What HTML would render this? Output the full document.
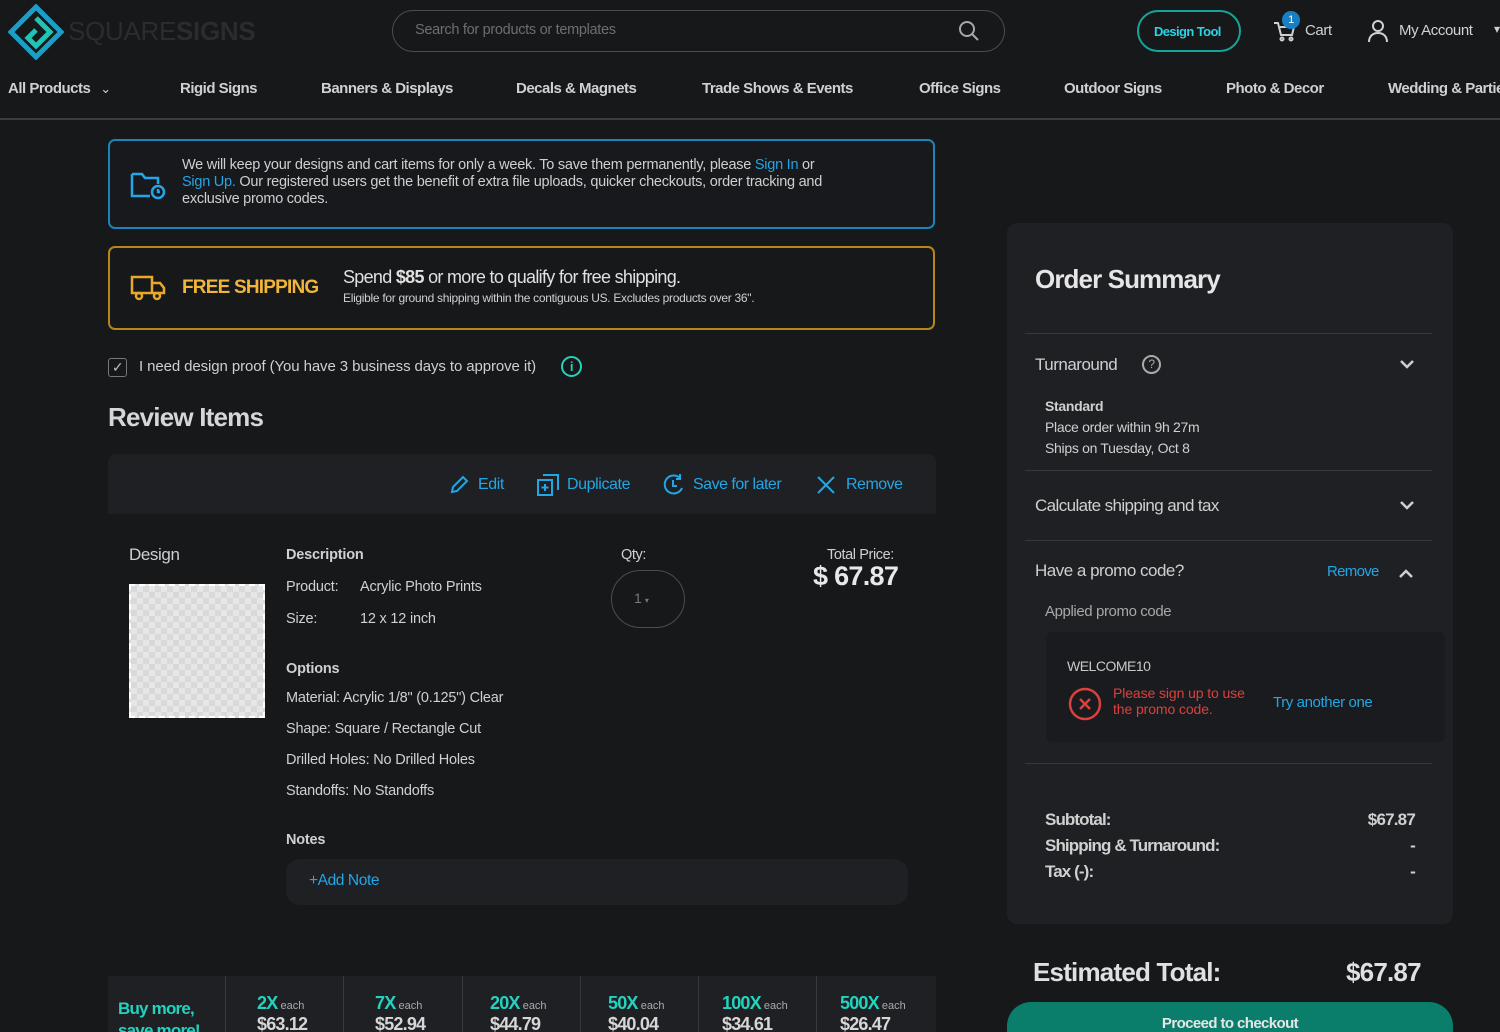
<!DOCTYPE html>
<html style="overflow:hidden;height:1032px"><head><meta charset="utf-8"><style>
*{box-sizing:border-box;margin:0;padding:0}
body{width:1500px;height:1032px;overflow:hidden;background:#17181a;color:#d6d6d6;font-family:"Liberation Sans",sans-serif;position:relative;letter-spacing:-0.4px}
.a{position:absolute;white-space:nowrap}
.b{color:#23a6e6}
.t{color:#22d3c0}
.card{position:absolute;background:#1f2023;border-radius:8px}
.hr{position:absolute;height:1px;background:#36383b}
.n{font-family:"Liberation Sans",sans-serif}
.nav span{letter-spacing:-0.5px}
</style></head><body>
<svg class="a" style="left:8px;top:4px" width="56" height="56" viewBox="0 0 56 56"><g fill="none" stroke-width="5"><path d="M28 3 L53 28 L28 53 L3 28 Z" stroke="#1a9fc9"/><path d="M28 14 L42 28 L28 42 L20 34 L28 26" stroke="#20c4b6"/></g></svg>
<div class="a n" style="left:68px;top:16px;font-size:26px;color:#2a2c2f;letter-spacing:-0.3px">SQUARE<b>SIGNS</b></div>
<div class="a" style="left:392px;top:10px;width:613px;height:42px;border:1px solid #4a4c50;border-radius:21px"></div>
<div class="a" style="left:415px;top:22px;font-size:14.5px;color:#6c6e72;letter-spacing:-0.3px">Search for products or templates</div>
<svg class="a" style="left:957px;top:19px" width="24" height="24" viewBox="0 0 24 24" fill="none" stroke="#a8a8a8" stroke-width="2"><circle cx="10" cy="10" r="7"/><path d="M15 15l6 6"/></svg>
<div class="a" style="left:1137px;top:10px;width:104px;height:42px;border:2px solid #16a39a;border-radius:21px"></div>
<div class="a n" style="left:1154px;top:24px;font-size:13px;font-weight:bold;color:#2ad3e6;letter-spacing:-0.6px">Design Tool</div>
<svg class="a" style="left:1273px;top:20px" width="24" height="22" viewBox="0 0 24 22" fill="none" stroke="#cfcfcf" stroke-width="2"><path d="M1 3h4l3 12h11l2-8H7"/><circle cx="9" cy="19" r="1.5"/><circle cx="18" cy="19" r="1.5"/></svg>
<div class="a n" style="left:1282px;top:11px;width:18px;height:18px;border-radius:9px;background:#1780c4;color:#fff;font-size:11px;text-align:center;line-height:18px">1</div>
<div class="a n" style="left:1305px;top:22px;font-size:15px;color:#d0d0d0">Cart</div>
<svg class="a" style="left:1367px;top:19px" width="22" height="24" viewBox="0 0 22 24" fill="none" stroke="#d0d0d0" stroke-width="2"><circle cx="11" cy="7" r="5"/><path d="M2 23c0-6 4-9 9-9s9 3 9 9"/></svg>
<div class="a n" style="left:1399px;top:22px;font-size:15px;color:#d0d0d0">My Account</div>
<div class="a" style="left:1494px;top:22px;font-size:12px;color:#d0d0d0">▾</div>
<div class="a nav" style="top:80px;left:8px;font-size:15px;font-weight:bold;color:#d0d0d0;width:1500px">
<span class="a" style="left:0">All Products <span style="font-weight:normal;font-size:13px">&nbsp;&nbsp;⌄</span></span>
<span class="a" style="left:172px">Rigid Signs</span>
<span class="a" style="left:313px">Banners &amp; Displays</span>
<span class="a" style="left:508px">Decals &amp; Magnets</span>
<span class="a" style="left:694px">Trade Shows &amp; Events</span>
<span class="a" style="left:911px">Office Signs</span>
<span class="a" style="left:1056px">Outdoor Signs</span>
<span class="a" style="left:1218px">Photo &amp; Decor</span>
<span class="a" style="left:1380px">Wedding &amp; Parties</span>
</div>
<div class="hr" style="left:0;top:118px;width:1500px;background:#3a3c40;height:2px"></div>

<div class="a" style="left:108px;top:139px;width:827px;height:90px;border:2px solid #1b84bf;border-radius:7px;background:#17191c"></div>
<svg class="a" style="left:130px;top:170px" width="36" height="30" viewBox="0 0 36 30" fill="none" stroke="#23a6e6" stroke-width="2.5"><path d="M2 4h10l3 4h13v6M2 4v22h18"/><circle cx="28" cy="22" r="6"/><path d="M28 19v3h2"/></svg>
<div class="a" style="left:182px;top:157px;font-size:14.5px;line-height:17px;color:#cfcfcf;letter-spacing:-0.25px">We will keep your designs and cart items for only a week. To save them permanently, please <span class="b">Sign In</span> or<br><span class="b">Sign Up.</span> Our registered users get the benefit of extra file uploads, quicker checkouts, order tracking and<br>exclusive promo codes.</div>
<div class="a" style="left:108px;top:246px;width:827px;height:84px;border:2px solid #b5871a;border-radius:7px"></div>
<svg class="a" style="left:130px;top:275px" width="36" height="26" viewBox="0 0 36 26" fill="none" stroke="#e8a92a" stroke-width="2.5"><path d="M2 2h20v16H2zM22 8h8l4 5v5H22"/><circle cx="9" cy="21" r="3"/><circle cx="27" cy="21" r="3"/></svg>
<div class="a" style="left:182px;top:277px;font-size:19px;font-weight:bold;color:#f0b53a;letter-spacing:-0.8px">FREE SHIPPING</div>
<div class="a" style="left:343px;top:267px;font-size:18px;color:#e0e0e0;letter-spacing:-0.7px">Spend <b>$85</b> or more to qualify for free shipping.</div>
<div class="a" style="left:343px;top:291px;font-size:12px;color:#d0d0d0;letter-spacing:-0.3px">Eligible for ground shipping within the contiguous US. Excludes products over 36".</div>
<div class="a" style="left:108px;top:358px;width:19px;height:19px;border:1px solid #777;border-radius:3px;color:#bbb;font-size:14px;text-align:center;line-height:17px">✓</div>
<div class="a" style="left:139px;top:358px;font-size:15px;color:#cfcfcf;letter-spacing:-0.1px">I need design proof (You have 3 business days to approve it)</div>
<div class="a n" style="left:561px;top:356px;width:21px;height:21px;border:2px solid #22d3c0;border-radius:50%;color:#22d3c0;font-size:13px;font-weight:bold;text-align:center;line-height:17px">i</div>
<div class="a" style="left:108px;top:402px;font-size:26px;font-weight:bold;color:#d6d6d6;letter-spacing:-0.8px">Review Items</div>

<div class="card" style="left:108px;top:454px;width:828px;height:60px;border-radius:8px 8px 0 0"></div>
<svg class="a" style="left:449px;top:475px" width="20" height="20" viewBox="0 0 20 20" fill="none" stroke="#23a6e6" stroke-width="2"><path d="M3 17l1-5L14 2l4 4L8 16z"/></svg>
<div class="a b" style="left:478px;top:476px;font-size:16px">Edit</div>
<svg class="a" style="left:537px;top:474px" width="22" height="22" viewBox="0 0 22 22" fill="none" stroke="#23a6e6" stroke-width="2"><rect x="1" y="6" width="14" height="15"/><path d="M6 1h15v15"/><path d="M8 10v7M4.5 13.5h7"/></svg>
<div class="a b" style="left:567px;top:476px;font-size:16px;letter-spacing:-0.4px">Duplicate</div>
<svg class="a" style="left:662px;top:474px" width="24" height="22" viewBox="0 0 24 22" fill="none" stroke="#23a6e6" stroke-width="2"><path d="M18 4A9 9 0 1 0 20 14"/><path d="M18 0v5h-4M11 6v6h4"/></svg>
<div class="a b" style="left:693px;top:476px;font-size:16px;letter-spacing:-0.5px">Save for later</div>
<svg class="a" style="left:816px;top:475px" width="20" height="20" viewBox="0 0 20 20" fill="none" stroke="#23a6e6" stroke-width="2"><path d="M2 2l16 16M18 2L2 18"/></svg>
<div class="a b" style="left:846px;top:476px;font-size:16px;letter-spacing:-0.5px">Remove</div>

<div class="a" style="left:129px;top:545px;font-size:17px;color:#cfcfcf">Design</div>
<div class="a" style="left:129px;top:584px;width:136px;height:134px;border:2px dashed #fff;background:#d9d9d9;background-image:linear-gradient(45deg,#e6e6e6 25%,transparent 25%,transparent 75%,#e6e6e6 75%),linear-gradient(45deg,#e6e6e6 25%,transparent 25%,transparent 75%,#e6e6e6 75%);background-size:12px 12px;background-position:0 0,6px 6px"></div>
<div style="letter-spacing:-0.2px">
<div class="a" style="left:286px;top:547px;font-size:14.5px;font-weight:bold;color:#d0d0d0">Description</div>
<div class="a" style="left:286px;top:579px;font-size:14.5px;color:#d0d0d0">Product:</div>
<div class="a" style="left:360px;top:579px;font-size:14.5px;color:#d0d0d0">Acrylic Photo Prints</div>
<div class="a" style="left:286px;top:611px;font-size:14.5px;color:#d0d0d0">Size:</div>
<div class="a" style="left:360px;top:611px;font-size:14.5px;color:#d0d0d0">12 x 12 inch</div>
<div class="a" style="left:286px;top:661px;font-size:14.5px;font-weight:bold;color:#d0d0d0">Options</div>
<div class="a" style="left:286px;top:690px;font-size:14.5px;color:#d0d0d0">Material: Acrylic 1/8" (0.125") Clear</div>
<div class="a" style="left:286px;top:721px;font-size:14.5px;color:#d0d0d0">Shape: Square / Rectangle Cut</div>
<div class="a" style="left:286px;top:752px;font-size:14.5px;color:#d0d0d0">Drilled Holes: No Drilled Holes</div>
<div class="a" style="left:286px;top:783px;font-size:14.5px;color:#d0d0d0">Standoffs: No Standoffs</div>
<div class="a" style="left:286px;top:832px;font-size:14.5px;font-weight:bold;color:#d0d0d0">Notes</div>
</div>
<div class="card" style="left:286px;top:859px;width:622px;height:46px;border-radius:14px"></div>
<div class="a b" style="left:309px;top:872px;font-size:15.5px;letter-spacing:-0.4px">+Add Note</div>
<div class="a" style="left:621px;top:547px;font-size:14.5px;color:#d0d0d0">Qty:</div>
<div class="a" style="left:611px;top:570px;width:74px;height:58px;border:1px solid #4a4c50;border-radius:29px"></div>
<div class="a n" style="left:634px;top:590px;font-size:14px;color:#777">1 <span style="font-size:8px">▾</span></div>
<div class="a" style="left:827px;top:547px;font-size:14.5px;color:#d0d0d0;letter-spacing:-0.4px">Total Price:</div>
<div class="a" style="left:813px;top:561px;font-size:27px;font-weight:bold;color:#e8e8e8;letter-spacing:-0.7px">$ 67.87</div>

<div class="card" style="left:108px;top:976px;width:828px;height:60px;border-radius:0"></div>
<div class="a t" style="left:118px;top:998px;font-size:17px;font-weight:bold;line-height:22px;letter-spacing:-0.8px">Buy more,<br>save more!</div>
<div style="position:absolute;left:225px;top:976px">
<div class="a" style="left:0;top:0;width:1px;height:56px;background:#36383b"></div>
<div class="a" style="left:118px;top:0;width:1px;height:56px;background:#36383b"></div>
<div class="a" style="left:237px;top:0;width:1px;height:56px;background:#36383b"></div>
<div class="a" style="left:355px;top:0;width:1px;height:56px;background:#36383b"></div>
<div class="a" style="left:473px;top:0;width:1px;height:56px;background:#36383b"></div>
<div class="a" style="left:591px;top:0;width:1px;height:56px;background:#36383b"></div>
</div>
<div class="a" style="top:994px;left:0;font-weight:bold;letter-spacing:-0.8px;line-height:18px">
<div class="a" style="left:257px"><span class="t" style="font-size:18px">2X</span><span style="font-size:11px;color:#aaa;font-weight:normal;letter-spacing:0"> each</span><br><span style="font-size:18px;color:#d6d6d6">$63.12</span></div>
<div class="a" style="left:375px"><span class="t" style="font-size:18px">7X</span><span style="font-size:11px;color:#aaa;font-weight:normal;letter-spacing:0"> each</span><br><span style="font-size:18px;color:#d6d6d6">$52.94</span></div>
<div class="a" style="left:490px"><span class="t" style="font-size:18px">20X</span><span style="font-size:11px;color:#aaa;font-weight:normal;letter-spacing:0"> each</span><br><span style="font-size:18px;color:#d6d6d6">$44.79</span></div>
<div class="a" style="left:608px"><span class="t" style="font-size:18px">50X</span><span style="font-size:11px;color:#aaa;font-weight:normal;letter-spacing:0"> each</span><br><span style="font-size:18px;color:#d6d6d6">$40.04</span></div>
<div class="a" style="left:722px"><span class="t" style="font-size:18px">100X</span><span style="font-size:11px;color:#aaa;font-weight:normal;letter-spacing:0"> each</span><br><span style="font-size:18px;color:#d6d6d6">$34.61</span></div>
<div class="a" style="left:840px"><span class="t" style="font-size:18px">500X</span><span style="font-size:11px;color:#aaa;font-weight:normal;letter-spacing:0"> each</span><br><span style="font-size:18px;color:#d6d6d6">$26.47</span></div>
</div>

<div class="card n" style="left:1007px;top:223px;width:446px;height:701px;border-radius:10px"></div>
<div class="a n" style="left:1035px;top:264px;font-size:26px;font-weight:bold;color:#e6e6e6;letter-spacing:-0.9px">Order Summary</div>
<div class="hr" style="left:1025px;top:333px;width:407px"></div>
<div class="a n" style="left:1035px;top:355px;font-size:17px;color:#cfcfcf;letter-spacing:-0.5px">Turnaround</div>
<div class="a n" style="left:1142px;top:355px;width:19px;height:19px;border:2px solid #aaa;border-radius:50%;font-size:12px;color:#aaa;text-align:center;line-height:15px">?</div>
<svg class="a" style="left:1399px;top:359px" width="16" height="10" viewBox="0 0 16 10" fill="none" stroke="#cfcfcf" stroke-width="2.5"><path d="M2 2l6 6 6-6"/></svg>
<div class="a n" style="left:1045px;top:396px;font-size:14px;line-height:21px;color:#d0d0d0;letter-spacing:-0.3px"><b>Standard</b><br>Place order within 9h 27m<br>Ships on Tuesday, Oct 8</div>
<div class="hr" style="left:1025px;top:470px;width:407px"></div>
<div class="a n" style="left:1035px;top:496px;font-size:17px;color:#cfcfcf;letter-spacing:-0.6px">Calculate shipping and tax</div>
<svg class="a" style="left:1399px;top:500px" width="16" height="10" viewBox="0 0 16 10" fill="none" stroke="#cfcfcf" stroke-width="2.5"><path d="M2 2l6 6 6-6"/></svg>
<div class="hr" style="left:1025px;top:540px;width:407px"></div>
<div class="a n" style="left:1035px;top:561px;font-size:17px;color:#cfcfcf;letter-spacing:-0.5px">Have a promo code?</div>
<div class="a n b" style="left:1327px;top:563px;font-size:15px;letter-spacing:-0.7px">Remove</div>
<svg class="a" style="left:1398px;top:569px" width="16" height="10" viewBox="0 0 16 10" fill="none" stroke="#cfcfcf" stroke-width="2.5"><path d="M2 8l6-6 6 6"/></svg>
<div class="a n" style="left:1045px;top:603px;font-size:15px;color:#a8a8a8;letter-spacing:-0.4px">Applied promo code</div>
<div class="a" style="left:1046px;top:632px;width:399px;height:110px;background:#1a1b1e;border-radius:6px"></div>
<div class="a n" style="left:1067px;top:658px;font-size:14px;color:#c8c8c8;letter-spacing:-0.5px">WELCOME10</div>
<svg class="a" style="left:1067px;top:686px" width="36" height="36" viewBox="0 0 36 36" fill="none" stroke="#d9413f" stroke-width="2.5"><circle cx="18" cy="18" r="15"/><path d="M13 13l10 10M23 13l-10 10"/></svg>
<div class="a n" style="left:1113px;top:685px;font-size:14px;line-height:16px;color:#d9413f;letter-spacing:-0.1px">Please sign up to use<br>the promo code.</div>
<div class="a n b" style="left:1273px;top:694px;font-size:15px;letter-spacing:-0.4px">Try another one</div>
<div class="hr" style="left:1025px;top:763px;width:407px"></div>
<div class="a n" style="left:1045px;top:807px;font-size:17px;line-height:26px;font-weight:bold;color:#d0d0d0;letter-spacing:-0.9px">Subtotal:<br>Shipping &amp; Turnaround:<br>Tax (-):</div>
<div class="a n" style="left:1340px;top:807px;width:75px;text-align:right;font-size:17px;line-height:26px;font-weight:bold;color:#d0d0d0;letter-spacing:-0.8px">$67.87<br>-<br>-</div>
<div class="a n" style="left:1033px;top:957px;font-size:26px;font-weight:bold;color:#e0e0e0;letter-spacing:-0.8px">Estimated Total:</div>
<div class="a n" style="left:1346px;top:957px;font-size:26px;font-weight:bold;color:#e0e0e0;letter-spacing:-0.8px">$67.87</div>
<div class="a" style="left:1007px;top:1002px;width:446px;height:30px;background:#0a7d6b;border-radius:24px 24px 0 0"></div>
<div class="a n" style="left:1007px;top:1015px;width:446px;text-align:center;font-size:15px;font-weight:bold;color:#e6e6e6;letter-spacing:-0.6px">Proceed to checkout</div>
</body></html>
